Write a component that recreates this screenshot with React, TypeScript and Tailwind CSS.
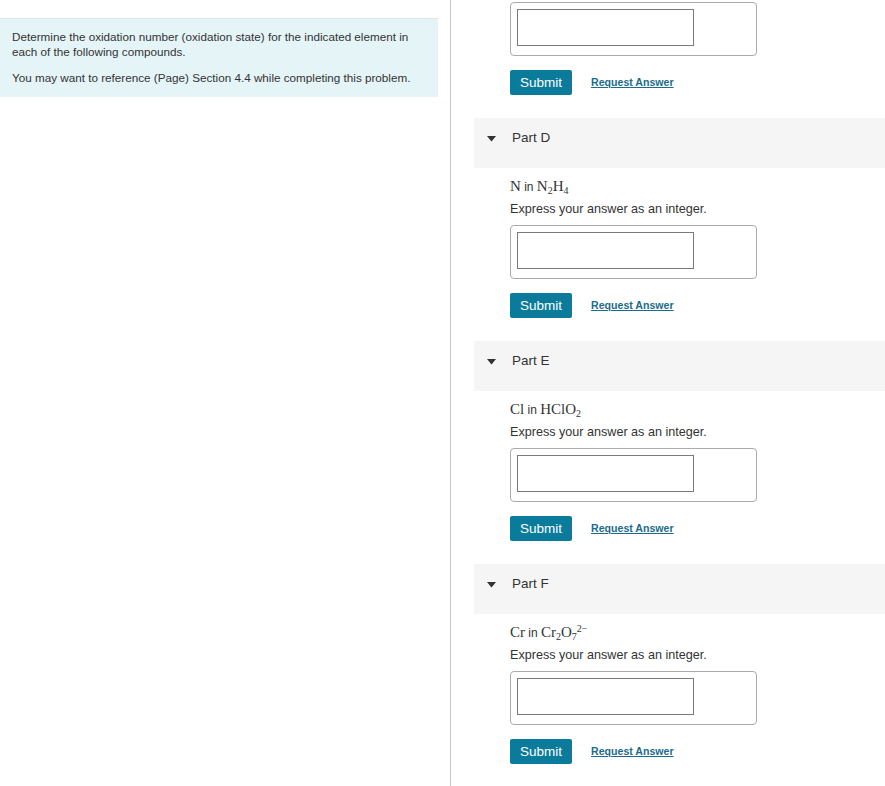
import type { ReactNode } from 'react'

const sans = { fontFamily: '"Liberation Sans", Arial, sans-serif' }

function Formula({ children }: { children: ReactNode }) {
  return (
    <span className="text-[15px]" style={{ fontFamily: '"Liberation Serif", "Times New Roman", serif' }}>
      {children}
    </span>
  )
}

function AnswerArea() {
  return (
    <div>
      <div className="h-[54px] w-[247px] rounded-[4px] border border-[#ababab] pt-[6px] pl-[6px]">
        <div className="h-[37px] w-[177px] border border-[#7a7a7a] bg-white" />
      </div>
      <div className="mt-[14px] flex items-center">
        <button className="h-[25px] w-[62px] rounded-[2px] bg-[#0b7b9c] text-[13.5px] leading-[25px] text-white">
          Submit
        </button>
        <a className="ml-[19px] text-[10.6px] font-bold text-[#1b6c8a] underline">Request Answer</a>
      </div>
    </div>
  )
}

function Part({ label, question }: { label: string; question: ReactNode }) {
  return (
    <div className="mt-[23px]">
      <div className="flex h-[50px] items-start bg-[#f5f5f5] pt-[11px] pl-[13px]">
        <svg width="9" height="6" viewBox="0 0 9 6" className="mt-[7px]">
          <path d="M0 0 L9 0 L4.5 5.5 Z" fill="#333" />
        </svg>
        <span className="ml-[16px] text-[13.5px] leading-[18px] text-[#333]">{label}</span>
      </div>
      <div className="pt-[9px] pl-[36px]">
        <div className="h-[18px] leading-[18px] text-[#333]">{question}</div>
        <div className="mt-[5px] h-[18px] text-[12.6px] leading-[18px] text-[#333]">
          Express your answer as an integer.
        </div>
        <div className="mt-[7px]">
          <AnswerArea />
        </div>
      </div>
    </div>
  )
}

const inWord = <span className="text-[12px]" style={sans}> in </span>

export default function App() {
  return (
    <div className="flex min-h-screen bg-white" style={sans}>
      <div className="w-[451px] shrink-0 border-r border-[#c9c9c9]">
        <div className="mt-[18px] w-[438px] border-t border-[#e3e3e3] bg-[#e5f4f7] px-[12px] pt-[10px] pb-[12px] text-[11.7px] leading-[15px] text-[#333]">
          <p>Determine the oxidation number (oxidation state) for the indicated element in each of the following compounds.</p>
          <p className="mt-[11px]">You may want to reference (Page) Section 4.4 while completing this problem.</p>
        </div>
      </div>
      <div className="flex-1 pl-[23px]">
        <div className="pt-[2px] pl-[36px]">
          <AnswerArea />
        </div>
        <Part
          label="Part D"
          question={
            <Formula>
              N{inWord}N<sub className="text-[10px]">2</sub>H<sub className="text-[10px]">4</sub>
            </Formula>
          }
        />
        <Part
          label="Part E"
          question={
            <Formula>
              Cl{inWord}HClO<sub className="text-[10px]">2</sub>
            </Formula>
          }
        />
        <Part
          label="Part F"
          question={
            <Formula>
              Cr{inWord}Cr<sub className="text-[10px]">2</sub>O<sub className="text-[10px]">7</sub>
              <sup className="text-[10px]">2−</sup>
            </Formula>
          }
        />
      </div>
    </div>
  )
}
